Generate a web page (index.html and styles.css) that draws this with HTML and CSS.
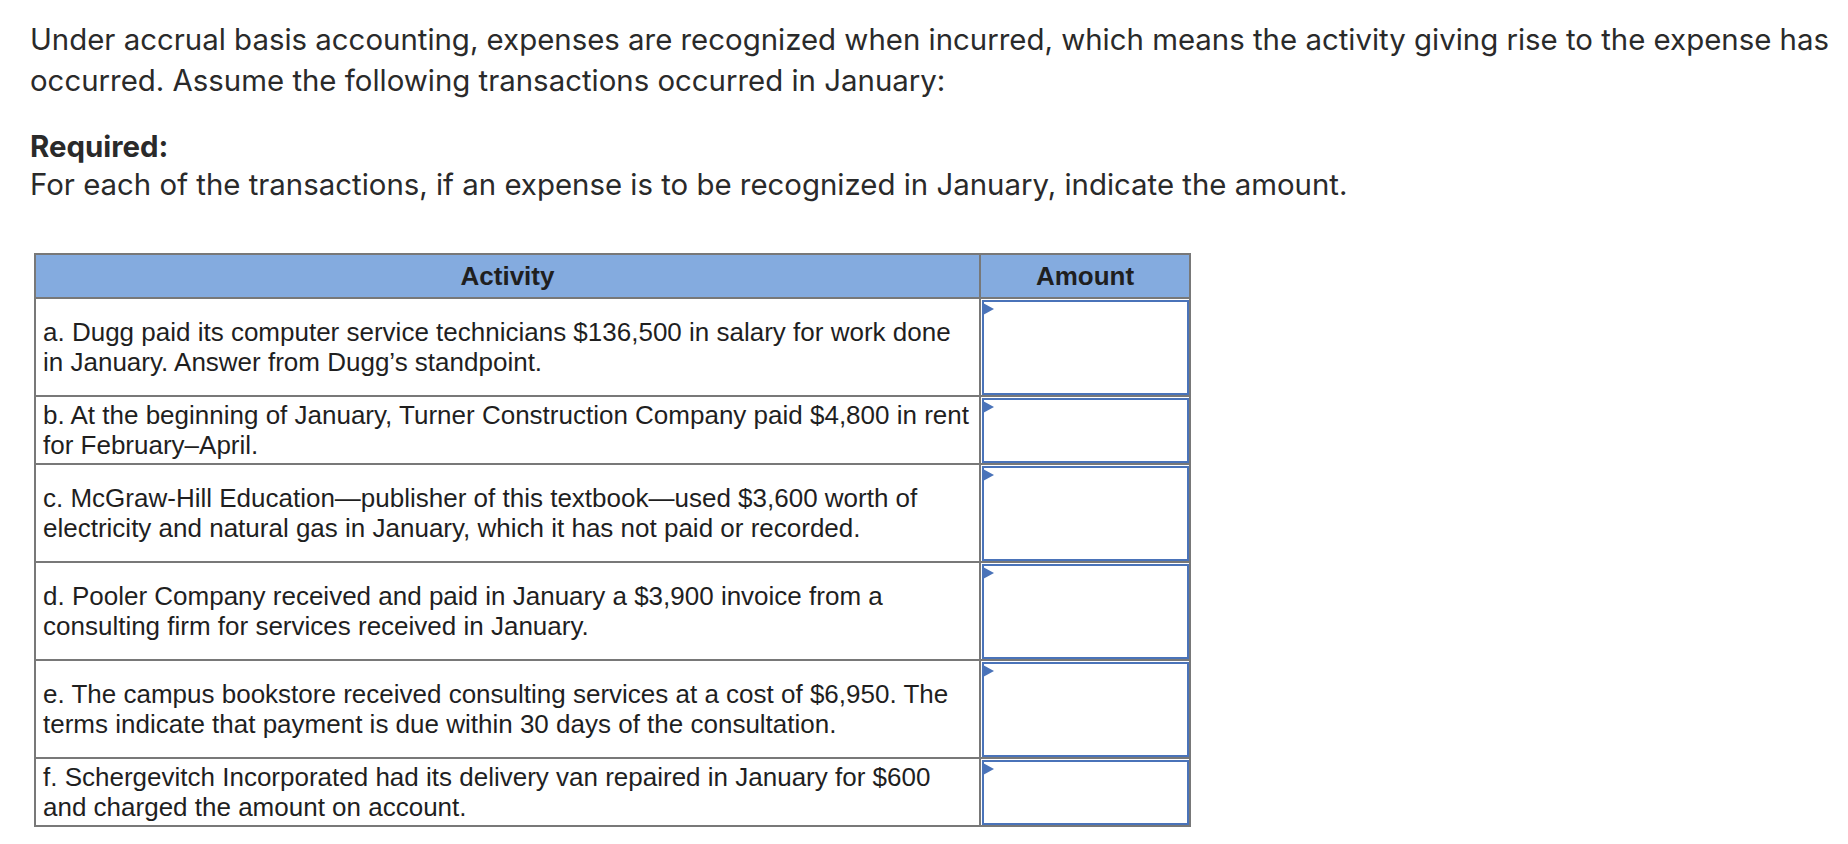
FILE: index.html
```html
<!DOCTYPE html>
<html lang="en">
<head>
<meta charset="utf-8">
<title>Accrual basis expenses</title>
<link rel="stylesheet" href="styles.css">
</head>
<body>
<main class="page">
  <p class="intro">Under accrual basis accounting, expenses are recognized when incurred, which means the activity giving rise to the expense has occurred. Assume the following transactions occurred in January:</p>
  <section class="required">
    <h2 class="required-title">Required:</h2>
    <p class="required-text">For each of the transactions, if an expense is to be recognized in January, indicate the amount.</p>
  </section>
  <div class="sheet">
    <div class="cell head">Activity</div>
    <div class="cell head last">Amount</div>

    <div class="cell activity tall">a. Dugg paid its computer service technicians $136,500 in salary for work done in January. Answer from Dugg’s standpoint.</div>
    <div class="cell amount tall last"><div class="entry"><span class="flag"></span></div></div>

    <div class="cell activity short">b. At the beginning of January, Turner Construction Company paid $4,800 in rent for February–April.</div>
    <div class="cell amount short last"><div class="entry"><span class="flag"></span></div></div>

    <div class="cell activity tall">c. McGraw-Hill Education—publisher of this textbook—used $3,600 worth of electricity and natural gas in January, which it has not paid or recorded.</div>
    <div class="cell amount tall last"><div class="entry"><span class="flag"></span></div></div>

    <div class="cell activity tall">d. Pooler Company received and paid in January a $3,900 invoice from a consulting firm for services received in January.</div>
    <div class="cell amount tall last"><div class="entry"><span class="flag"></span></div></div>

    <div class="cell activity tall">e. The campus bookstore received consulting services at a cost of $6,950. The terms indicate that payment is due within 30 days of the consultation.</div>
    <div class="cell amount tall last"><div class="entry"><span class="flag"></span></div></div>

    <div class="cell activity short">f. Schergevitch Incorporated had its delivery van repaired in January for $600 and charged the amount on account.</div>
    <div class="cell amount short last"><div class="entry"><span class="flag"></span></div></div>
  </div>
</main>
</body>
</html>
```

FILE: styles.css
```css
* {
  box-sizing: border-box;
}

html, body {
  margin: 0;
  padding: 0;
  background: #ffffff;
}

.page {
  padding: 19px 4px 0 30px;
  font-family: "Inter", "Lato", sans-serif;
  color: #2a2a2a;
}

.intro {
  margin: 0;
  font-size: 29.4px;
  line-height: 41px;
}

.required {
  margin-top: 27px;
}

.required-title {
  margin: 0;
  font-size: 29.4px;
  line-height: 38px;
  font-weight: 700;
}

.required-text {
  margin: 0;
  font-size: 29.4px;
  line-height: 38px;
}

.sheet {
  margin: 49px 0 0 4px;
  width: 1157px;
  display: grid;
  grid-template-columns: 945px 210px;
  border-top: 2px solid #787878;
  border-left: 2px solid #787878;
  font-family: "Liberation Sans", Arial, sans-serif;
  font-size: 26px;
  line-height: 30px;
  color: #1f1f1f;
}

.cell {
  border-right: 2px solid #787878;
  border-bottom: 2px solid #787878;
}

.head {
  height: 44px;
  background: #84abdf;
  font-weight: 700;
  display: flex;
  align-items: center;
  justify-content: center;
}

.tall {
  height: 98px;
}

.short {
  height: 68px;
}

.activity {
  display: flex;
  align-items: center;
  padding: 0 3px 0 7px;
}

.amount {
  padding: 1px 0 0 1px;
}

.entry {
  position: relative;
  height: 100%;
  border: 2px solid #4a73b9;
  background: #ffffff;
}

.flag {
  position: absolute;
  left: -1px;
  top: 1px;
  width: 0;
  height: 0;
  border-left: 11px solid #4a73b9;
  border-top: 6px solid transparent;
  border-bottom: 6px solid transparent;
}
```
